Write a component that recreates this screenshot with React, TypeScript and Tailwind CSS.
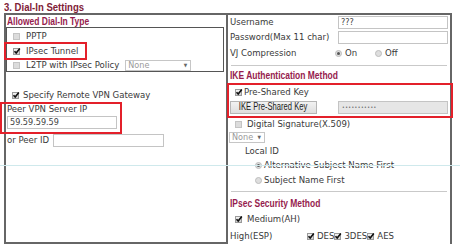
import React from 'react'

const body = "font-['DejaVu_Sans_Condensed','DejaVu_Sans',sans-serif] text-[9.5px] text-[#3a3a3a]"
const arial = "font-['Liberation_Sans',Arial,sans-serif]"

function Heading({ children, className = '' }: { children: React.ReactNode; className?: string }) {
  return (
    <div className={`h-[12px] leading-[12px] whitespace-nowrap ${className}`}>
      <span className={`${arial} inline-block font-bold text-[11px] text-[#961c4e] origin-left scale-x-[0.77]`}>
        {children}
      </span>
    </div>
  )
}

function Check({ on = false }: { on?: boolean }) {
  return (
    <span
      className={`relative inline-block w-[7px] h-[7px] shrink-0 border ${
        on ? 'border-[#9a9a9a] bg-gradient-to-b from-[#f4f4f4] to-[#cfcfcf]' : 'border-[#c4c4c4] bg-[#dcdcdc]'
      }`}
    >
      {on && (
        <svg viewBox="0 0 8 8" className="absolute left-[-1px] top-[-2px] w-[8px] h-[8px]">
          <path d="M1.5 4.2 L3.2 6 L6.8 1.5" stroke="#111" strokeWidth="1.6" fill="none" />
        </svg>
      )}
    </span>
  )
}

function Radio({ on = false }: { on?: boolean }) {
  return (
    <span className="inline-flex items-center justify-center w-[7px] h-[7px] shrink-0 rounded-full border border-[#bdbdbd] bg-[#dedede]">
      {on && <span className="w-[3px] h-[3px] rounded-full bg-[#555]" />}
    </span>
  )
}

function Input({ w, value }: { w: string; value?: string }) {
  return (
    <div className={`${w} h-[13px] shrink-0 border border-[#c4c4c4] bg-white flex items-center pl-[2px] text-[9px] text-[#444] leading-none`}>
      {value}
    </div>
  )
}

function Select({ w }: { w: string }) {
  return (
    <div className={`${w} h-[11px] shrink-0 border border-[#c6c6c6] bg-white flex items-center justify-between px-[2px] text-[9px] text-[#9a9a9a] leading-none`}>
      <span>None</span>
      <span className="text-[5px] text-[#666] pr-[1px]">▼</span>
    </div>
  )
}

export default function App() {
  return (
    <div className={`relative w-[474px] h-[244px] overflow-hidden bg-white ${body}`}>
      <div className="pl-[4px] pt-[1px] h-[13px] leading-[12px] whitespace-nowrap">
        <span className={`${arial} inline-block font-bold text-[11.5px] text-[#7f2136] origin-left scale-x-[0.83]`}>
          3. Dial-In Settings
        </span>
      </div>

      <div className="ml-[4px] w-[448px] flex border-t-2 border-[#666]">
        {/* left column */}
        <div className="w-[224px] h-[229px] border-l-2 border-r-2 border-b-2 border-[#666] flex flex-col">
          <Heading className="pl-[1px]">Allowed Dial-In Type</Heading>
          <div className="w-[218px] h-[45px] border border-[#555] flex flex-col pt-[1px]">
            <div className="h-[15px] flex items-center pl-[6px] gap-[6px]">
              <Check />
              <span>PPTP</span>
            </div>
            <div className="h-[16px] flex items-center pl-[6px] gap-[6px]">
              <Check on />
              <span>IPsec Tunnel</span>
            </div>
            <div className="h-[12px] flex items-center pl-[6px] gap-[6px]">
              <Check />
              <span>L2TP with IPsec Policy</span>
              <Select w="w-[66px]" />
            </div>
          </div>
          <div className="mt-[16px] h-[14px] flex items-center pl-[6px] gap-[4px]">
            <Check on />
            <span>Specify Remote VPN Gateway</span>
          </div>
          <div className="h-[14px] flex items-center pl-[1px]">Peer VPN Server IP</div>
          <div className="pl-[1px]">
            <Input w="w-[110px]" value="59.59.59.59" />
          </div>
          <div className="mt-[4px] h-[14px] flex items-center pl-[1px] gap-[4px]">
            <span>or Peer ID</span>
            <Input w="w-[111px]" />
          </div>
        </div>

        {/* right column */}
        <div className="w-[224px] border-r-2 border-[#666] flex flex-col pl-[2px] pr-[2px]">
          <div className="h-[14px] flex items-center">
            <span className="w-[108px]">Username</span>
            <Input w="w-[110px]" value="???" />
          </div>
          <div className="mt-[1px] h-[14px] flex items-center">
            <span className="w-[108px]">Password(Max 11 char)</span>
            <Input w="w-[110px]" />
          </div>
          <div className="mt-[2px] h-[14px] flex items-center">
            <span className="w-[105px]">VJ Compression</span>
            <Radio on />
            <span className="ml-[3px] w-[30px]">On</span>
            <Radio />
            <span className="ml-[3px]">Off</span>
          </div>
          <div className="mt-[5px] mx-[1px] h-px bg-[#c9c9c9]" />
          <Heading className="mt-[3px]">IKE Authentication Method</Heading>
          <div className="mt-[4px] h-[14px] flex items-center pl-[5px] gap-[2px]">
            <Check on />
            <span>Pre-Shared Key</span>
          </div>
          <div className="mt-[1px] h-[14px] flex items-center">
            <div className="w-[87px] h-[13px] border border-[#b5b5b5] bg-gradient-to-b from-[#f2f2f2] to-[#dedede] flex items-center justify-center leading-none whitespace-nowrap">
              <span className={`${arial} inline-block text-[10px] text-[#222] scale-x-[0.76]`}>IKE Pre-Shared Key</span>
            </div>
            <div className="ml-[21px] w-[110px] h-[13px] border border-[#c4c4c4] bg-[#e6e6e6] flex items-center pl-[3px] text-[5px] tracking-[0.5px] text-[#555] leading-none">
              •••••••••••
            </div>
          </div>
          <div className="mt-[4px] h-[13px] flex items-center pl-[5px] gap-[5px]">
            <Check />
            <span>Digital Signature(X.509)</span>
          </div>
          <div className="mt-[1px] -ml-[1px]">
            <Select w="w-[36px]" />
          </div>
          <div className="mt-[2px] h-[12px] flex items-center pl-[15px]">Local ID</div>
          <div className="mt-[1px] h-[14px] flex items-center pl-[25px] gap-[2px]">
            <Radio on />
            <span>Alternative Subject Name First</span>
          </div>
          <div className="mt-[1px] h-[14px] flex items-center pl-[25px] gap-[2px]">
            <Radio />
            <span>Subject Name First</span>
          </div>
          <div className="mt-[4px] mx-[1px] h-px bg-[#c9c9c9]" />
          <Heading className="mt-[5px]">IPsec Security Method</Heading>
          <div className="mt-[3px] h-[14px] flex items-center pl-[5px] gap-[5px]">
            <Check on />
            <span>Medium(AH)</span>
          </div>
          <div className="mt-[3px] h-[14px] flex items-center">
            <span className="w-[77px]">High(ESP)</span>
            <Check on />
            <span className="ml-[3px]">DES</span>
            <Check on />
            <span className="ml-[3px]">3DES</span>
            <Check on />
            <span className="ml-[3px]">AES</span>
          </div>
        </div>
      </div>

      {/* annotations over the page */}
      <div className="absolute left-0 top-[165px] w-[460px] h-px bg-[#cfe9ec]" />
      <div className="absolute left-[4px] top-[42px] w-[83px] h-[18px] border-2 border-[#e3202a]" />
      <div className="absolute left-0 top-[102px] w-[122px] h-[32px] border-2 border-[#e3202a]" />
      <div className="absolute left-[227px] top-[83px] w-[226px] h-[35px] border-2 border-[#e3202a]" />
    </div>
  )
}
